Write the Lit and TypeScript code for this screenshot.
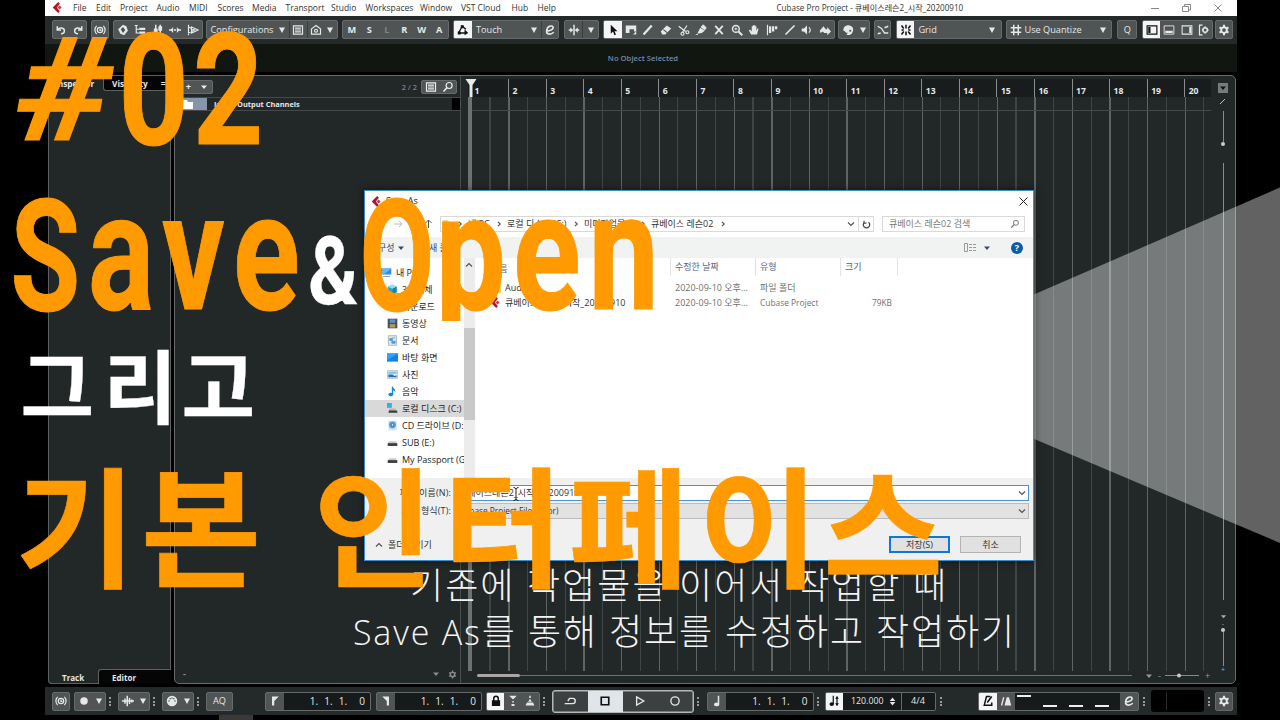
import { LitElement, html, css, svg } from "lit";
import { customElement } from "lit/decorators.js";

const icon = (body: unknown, w = 14, h = 14) =>
  html`<svg class="ic" width=${w} height=${h} viewBox="0 0 16 16" fill="none" stroke="currentColor" stroke-width="1.6">${body}</svg>`;

const I: Record<string, any> = {
  undo: svg`<path d="M3 3v5h5M3.5 7.5C6 4 12.500 4.500 12.500 9c0 2.500-2 4-4.500 4" stroke-width="2"/>`,
  redo: svg`<path d="M13 3v5H8M12.500 7.500C10 4 3.500 4.500 3.500 9c0 2.500 2 4 4.500 4" stroke-width="2"/>`,
  sync: svg`<circle cx="8" cy="8" r="3.600"/><path d="M8 6v2.500h2M3.500 2.500c-3 3-3 8 0 11M12.500 2.500c3 3 3 8 0 11"/>`,
  cube: svg`<path d="M8 1L1.500 7l3 6 5 2 5-6-2-6z" fill="currentColor" stroke="none"/><path d="M8 4l-3 3 3 5 3-4z" fill="#4c5050" stroke="none"/>`,
  tree: svg`<path d="M1 2h4M3 2v10h4M3 7h4"/><path d="M7 5h8v3H7zM7 10h8v3H7z" fill="currentColor" stroke="none"/>`,
  mix: svg`<path d="M5 1v14M11 1v14" stroke-width="2"/><path d="M2.500 6h5v6h-5zM8.500 3h5v6h-5z" fill="currentColor" stroke="none"/>`,
  wave: svg`<path d="M0 8h4M12 8h4M6.500 8h3" stroke-width="2"/><path d="M5.500 4v8L2 8zM10.500 4v8L14 8z" fill="currentColor" stroke="none"/>`,
  play2: svg`<path d="M2 1v14M2 4l8 4-8 4zM6 4l9 4-9 4z"/>`,
  list: svg`<path d="M2 2.500h12v11H2zM4 5.500h8M4 8h8M4 10.500h8"/>`,
  home: svg`<path d="M2 6.500L8 2l6 4.500V13.500H2z"/><circle cx="8" cy="9" r="2"/>`,
  auto: svg`<path d="M2 12L7 3l5 4" stroke-width="1.800"/><path d="M2 12h9" stroke-width="2"/><path d="M10 7l5 5-5 3zM5 1.500h4v4H5zM1 10h4v4H1z" fill="currentColor" stroke="none"/>`,
  e: svg`<path d="M3 9.500C8 9.500 13 7 12 4 11 1 4 3 3.500 9 3 14.500 9 14.500 13 11" stroke-width="2.200"/>`,
  scroll: svg`<path d="M8 1v14M1 8h3M12 8h3" stroke-width="2"/><path d="M3 4.500L7 8l-4 3.500zM13 4.500L9 8l4 3.500z" fill="currentColor" stroke="none"/>`,
  arrow: svg`<path d="M5 1v12l3-3 2 5 2-1-2-4.500h4z" fill="currentColor" stroke="none"/>`,
  range: svg`<path d="M1 2h14v8h-3V7H6v5H1z" fill="currentColor" stroke="none"/><path d="M8 13.500h3l4-4v4.500z" fill="currentColor" stroke="none"/>`,
  pencil: svg`<path d="M2 14L13 2" stroke-width="3"/>`,
  erase: svg`<path d="M1 10l8-8 6 4-8 8H3z" fill="currentColor" stroke="none"/><path d="M4.500 7.500l5 4" stroke="#4c5050"/>`,
  cut: svg`<path d="M1 3l9 7M12 2L6 11"/><circle cx="12.500" cy="11" r="2"/><circle cx="6" cy="13" r="2"/>`,
  glue: svg`<path d="M3 13l4-8 6 4-4 3z" fill="currentColor" stroke="none"/><path d="M8 4l3-3 4 4-2 3zM1 14h3" fill="currentColor" stroke-width="1"/>`,
  mute: svg`<path d="M3 2.500l10 11M13 2.500l-10 11" stroke-width="2.400"/>`,
  zoom: svg`<circle cx="6.500" cy="6.500" r="4.500" stroke-width="2"/><path d="M10 10l5 5" stroke-width="2.600"/><path d="M6.500 4.500v4M4.500 6.500h4" stroke-width="1.200"/>`,
  hand: svg`<path d="M4 14L1 8l2-.5L5 10V3h1.500v5V1.500H8V8V1.500h1.700V8 3h1.500v6l1.600-3.500 1.200.5-2 8z" fill="currentColor" stroke="none"/>`,
  comp: svg`<path d="M2 1v14" /><path d="M4 3h3v9H4zM8 3h3v7H8zM12 3h3v4h-3z" fill="currentColor" stroke="none"/>`,
  line: svg`<path d="M2 14L14 2" stroke-width="2.200"/>`,
  speak: svg`<path d="M1 6h3l4-4v12l-4-4H1z" fill="currentColor" stroke="none"/><path d="M10.500 4.500c2.500 2 2.500 5 0 7" stroke-width="1.600"/>`,
  warp: svg`<path d="M1 9l5-6 3 4h2V4l5 6-5 5v-3H7l-2-2-3 2z" fill="currentColor" stroke="none"/>`,
  pal: svg`<path d="M2 9c-1-5 4-8 8-7 5 1 6 6 4 9-1 3-5 5-8 3l3-4-2-1z" fill="currentColor" stroke="none"/><path d="M2 8h6l2 3-4 1z" fill="currentColor" stroke="none"/><circle cx="11" cy="9" r="1.400" fill="#4c5050" stroke="none"/>`,
  cross: svg`<path d="M1 3l5 3 4 6h5M1 13l4-1M10 5l5-2" stroke-width="1.800"/>`,
  snap: svg`<path d="M8 1v5M8 10v5M2 2l3 4M2 14l3-4M14 2l-3 4M14 14l-3-4M2 8h3M11 8h3" stroke-width="2"/>`,
  hash: svg`<path d="M5 1v14M11 1v14M1 5h14M1 11h14" stroke-width="2"/>`,
  zl: svg`<path d="M1.500 2.500h13v11h-13z"/><path d="M3 4h3v8H3z" fill="currentColor" stroke="none"/>`,
  zb: svg`<path d="M1.500 2.500h13v11h-13z" stroke-width="1.200"/><path d="M3 9h10v3H3z" fill="currentColor" stroke="none"/>`,
  zr: svg`<path d="M1.500 2.500h13v11h-13z" stroke-width="1.400"/><path d="M11 4h2.500v8H11z" fill="currentColor" stroke="none"/>`,
  zg: svg`<path d="M6 1.500H2v13h4"/><circle cx="9.500" cy="8" r="3" stroke-width="2"/><path d="M9.500 3v2M9.500 11v2M5 8h2M12.500 8h2"/>`,
  gear: svg`<circle cx="8" cy="8" r="3.800" stroke-width="2.600"/><path d="M8 1v3M8 12v3M2 4.500l2.600 1.500M11.400 10l2.600 1.500M2 11.500L4.600 10M11.400 6L14 4.500" stroke-width="2.600"/>`,
  lens: svg`<circle cx="9.500" cy="6" r="4"/><path d="M6.500 9L2 14" stroke-width="2"/>`,
  dot: svg`<circle cx="8" cy="8" r="5" fill="currentColor" stroke="none"/>`,
  wav2: svg`<path d="M0 8h16M4 4.500v7M7 1v14M10 4v8M13 6v4" stroke-width="2"/>`,
  midi: svg`<circle cx="8" cy="8" r="7" fill="currentColor" stroke="none"/><g fill="#4c5050" stroke="none"><circle cx="4" cy="8" r="1"/><circle cx="5.500" cy="5" r="1"/><circle cx="8" cy="4" r="1"/><circle cx="10.500" cy="5" r="1"/><circle cx="12" cy="8" r="1"/></g>`,
  locL: svg`<path d="M4 2h9l-6 6v6H4z" fill="currentColor" stroke="none"/>`,
  locR: svg`<path d="M3 2h9v12H9V8z" fill="currentColor" stroke="none"/>`,
  lock: svg`<path d="M2.500 7h11v7.500h-11z" fill="currentColor" stroke="none"/><path d="M5 8V4.500a3 3 0 0 1 6 0V8" stroke-width="2"/>`,
  pIn: svg`<path d="M3 1h10L8 6zM7 8h2v2H7zM6 12h4v2.500H6z" fill="currentColor" stroke="none"/>`,
  pOut: svg`<path d="M7 1h2v3H7zM8 5l2.500 4h-5zM2 14l2-4h8l2 4z" fill="currentColor" stroke="none"/>`,
  loop: svg`<path d="M1 11.500h10.500a3.500 3.500 0 0 0 0-7H7.500L5 8" stroke-width="1.800"/>`,
  stop: svg`<path d="M3 3h10v10H3z" stroke-width="2.200"/>`,
  play: svg`<path d="M3.500 2.500L13 8l-9.500 5.500z" stroke-width="1.800"/>`,
  rec: svg`<circle cx="8" cy="8" r="5.500" stroke-width="1.800"/>`,
  note: svg`<path d="M10 1v11" stroke-width="2"/><ellipse cx="7.500" cy="12.500" rx="3.500" ry="2.500" fill="currentColor" stroke="none"/>`,
  note2: svg`<path d="M7 1v11M12 2v12" stroke-width="1.600"/><path d="M9.500 5L12 1.500 14.500 5zM9.500 11l2.500 3.500 2.500-3.500z" fill="currentColor" stroke="none"/><ellipse cx="5" cy="12" rx="3" ry="2.500" fill="currentColor" stroke="none"/>`,
  metro: svg`<path d="M11 2H6L3 13.500h10V10M7 10l6-8" stroke-width="2"/>`,
  count: svg`<path d="M2 14L5 3" stroke-width="1.800"/><path d="M9 3h3l3 11H6z" fill="currentColor" stroke="none"/>`,
  tri: svg`<path d="M2 3h12L8 14z" fill="currentColor" stroke="none"/>`,
  flat: svg`<path d="M2 5h12l-6 7z" fill="currentColor" stroke="none"/>`,
  spin: svg`<path d="M3 7l5-6 5 6zM3 9h10l-5 6z" fill="currentColor" stroke="none"/>`,
};
const ic = (n: string, s = 12) => icon(I[n], s, s);

type Cell = [string, number, string?];
/* one toolbar cell: [content, width, extra classes]; "@name" selects an icon */
const cell = ([c, w, k = ""]: Cell) =>
  html`<span class="cell ${k}" style="width:${w}px">${c[0] === "@" ? ic(c.slice(1), /tri|flat/.test(c) ? 8 : 12) : c}</span>`;
const group = (cells: Cell[], k = "") => html`<span class="group ${k}">${cells.map(cell)}</span>`;
const space = (w: number) => html`<span class="sp" style="width:${w}px"></span>`;

const MENU: [string, number][] = [["File", 23], ["Edit", 24], ["Project", 36.500], ["Audio", 32.500], ["MIDI", 28.500], ["Scores", 34.500], ["Media", 33.500], ["Transport", 45.500], ["Studio", 34.500], ["Workspaces", 54.500], ["Window", 41], ["VST Cloud", 50.500], ["Hub", 26], ["Help", 239]];

const NAV: [string, string][] = [["pc", "내 PC"], ["cube", "3D 개체"], ["down", "다운로드"], ["film", "동영상"], ["doc", "문서"], ["desk", "바탕 화면"], ["pic", "사진"], ["music", "음악"], ["disk", "로컬 디스크 (C:)"], ["cd", "CD 드라이브 (D:)"], ["drive", "SUB (E:)"], ["drive", "My Passport (G:)"]];
const drive = svg`<path d="M3 6h10l2 4H1z" fill="#c8c8c8"/><path d="M1 9h14v4H1z" fill="#3c3c3c"/>`;
const NI: Record<string, any> = {
  pc: svg`<path d="M0 2h15v9H0z" fill="#2d8fe0"/><path d="M1 3h13l-9 7H1z" fill="#67b8f3"/><path d="M3 13h10v1.500H3z" fill="#8fa3b3"/>`,
  cube: svg`<path d="M1 4l7-3 6 3v8l-6 3-7-3z" fill="#27a4cf"/><path d="M1 4l7-3 6 3-6 3z" fill="#8ee1f3"/><path d="M8 7l6-3v8l-6 3z" fill="#1782ab"/>`,
  down: svg`<path d="M6 1h4v7h4l-6 7-6-7h4z" fill="#2b6fb8"/>`,
  film: svg`<path d="M1 1h14v14H1z" fill="#4a4f58"/><path d="M4 2h8v5H4z" fill="#5f93c8"/><path d="M4 9h8v5H4z" fill="#b59a5f"/>`,
  doc: svg`<path d="M2 1h12v14H2z" fill="#dfe9f0" stroke="#8ca0b0"/><path d="M4 5h4v3H4zM7 9h5v3H7zM8 4h4" fill="#4a9bd0" stroke="#4a9bd0"/>`,
  desk: svg`<path d="M0 2h16v12H0z" fill="#1583e0"/><path d="M0 2h16L0 12z" fill="#2fa4f8"/>`,
  pic: svg`<path d="M.5 2.500h15v11H.5z" fill="#e5eef5" stroke="#9aa8b2"/><path d="M2 8h6l3 2 3-1v3H2z" fill="#2774ad"/><path d="M2 4h12v3H2z" fill="#7fc1ea"/>`,
  music: svg`<path d="M8 1v11" stroke="#1a86d0" stroke-width="2"/><path d="M8 1c1 3 5 3 4 8-1-2-2-3-4-3z" fill="#1a86d0"/><ellipse cx="5.500" cy="12.500" rx="3.500" ry="2.600" fill="#1a86d0"/>`,
  disk: svg`<path d="M0 0h7v7H0z" fill="#35aee2"/><path d="M3 10h10l2 2v2H2z" fill="#3c3c3c"/><path d="M3 8h9l2 3H3z" fill="#b8b8b8"/>`,
  cd: svg`<path d="M2 1h12v14H2z" fill="#cfe0ec"/><circle cx="8" cy="7" r="5" fill="#4c9ed8"/><circle cx="8" cy="7" r="1.800" fill="#e8f4fb" stroke="#1b5f95"/>`,
  drive,
};
const LOGO = svg`<path d="M9 0L1 8l8 8 2.500-2.500L7 8l4.500-5.500z" fill="#b0172c"/><path d="M11 5l3 3-3 3-3-3z" fill="#c93a4c"/>`;
const pic = (b: unknown, s = 12) => html`<svg class="ic" width=${s} height=${s} viewBox="0 0 16 16" fill="none">${b}</svg>`;
const chev = (d: string, s = 8) => html`<svg class="ic" width=${s} height=${s} viewBox="0 0 8 8" fill="none" stroke="#555" stroke-width="1.200"><path d=${d}></path></svg>`;
const DN = "M1 2.500l3 3 3-3", RT = "M3 1.800l2.200 2.200-2.200 2.200", UP = "M1 5.500l3-3 3 3";

/* display lettering: every glyph is set at its own x, condensed by sx */
const letters = (s: string, xs: number[], y: number, size: number, sx: number, k: string) =>
  svg`<text class=${k} font-size=${size} transform="translate(0 ${y}) scale(${sx} 1)" x=${xs.map((x) => (x / sx).toFixed(1)).join(" ")}>${s}</text>`;

@customElement("app-root")
export class AppRoot extends LitElement {
  static styles = css`
    :host { display: block; position: relative; width: 1280px; height: 720px; overflow: hidden; background: #000; color: #e6e8e8;
      font: 9px/12px "Open Sans", "Noto Sans CJK KR", sans-serif; }
    * { box-sizing: border-box; }
    .ic { flex: none; display: block; }
    .app { display: flex; flex-direction: column; width: 1192px; height: 720px; margin-left: 45px; }
    .menu { display: flex; align-items: center; height: 16px; background: #fff; color: #333; padding: 0 0 1px 7px; white-space: nowrap; font-size: 8.500px; flex: none; }
    .menu .logo { width: 21px; }
    .mi { flex: none; }
    .wtitle { width: 374px; font-size: 8.100px; flex: none; }
    .winbtn { display: flex; gap: 23px; color: #888; }
    .bar { display: flex; align-items: flex-start; height: 28px; padding: 4px 0 0 7px; background: #24292a; flex: none; }
    .group { display: flex; height: 19px; background: #505454; border: 1px solid #666a6a; border-radius: 2px; flex: none; overflow: hidden; }
    .sp { flex: none; }
    .cell { display: flex; align-items: center; justify-content: center; flex: none; white-space: nowrap; font-size: 9.200px; }
    .l { justify-content: flex-start; padding-left: 4px; }
    .q1 { justify-content: flex-start; }
    .b { font-weight: 700; }
    .dim { color: #808484; }
    .on { background: #f4f6f6; color: #111; }
    .dv { border-left: 1px solid #3a3e3e; }
    .tdv { border-left: 1px solid #666a6a; }
    .dk { background: #161a1a; }
    .num { font-size: 10px; word-spacing: 3.500px; justify-content: flex-end; padding-right: 5px; white-space: pre; }
    .tempo { display: flex; align-items: center; justify-content: flex-end; gap: 4px; width: 58px; padding-right: 4px; font-size: 8.800px; background: #161a1a; }
    .info { display: flex; height: 28px; background: #121611; align-items: center; justify-content: center; color: #7288a6; font-weight: 600; font-size: 7.700px; padding-left: 4px; flex: none; }
    .main { display: flex; height: 615px; padding: 3px 1px 3px 3px; gap: 3px; flex: none; }
    .left { display: flex; flex-direction: column; width: 123px; background: #222728; border-radius: 4px; border-top: 1px solid #5c6060; font-weight: 700; font-size: 8.300px; }
    .lt { display: flex; height: 15px; }
    .lt .a, .lb .a { border-left: 1px solid #5c6060; }
    .lt .a { width: 55px; padding: 2px 0 0 6px; }
    .lt .v { flex: 1; display: flex; gap: 13px; background: #050505; border: solid #5c6060; border-width: 0 0 1px 1px; border-radius: 0 0 0 3px; padding: 2px 0 0 8px; }
    .lm { flex: 1; border: solid #5c6060; border-width: 0 1px 0 1px; }
    .lb { display: flex; height: 15px; }
    .lb .a { width: 50px; border-bottom: 1px solid #5c6060; border-radius: 0 0 0 4px; padding: 3px 0 0 13px; font-size: 8px; }
    .lb .e { flex: 1; background: #050505; border: solid #5c6060; border-width: 1px 0 0 1px; border-radius: 3px 0 0 0; padding: 2px 0 0 13px; font-size: 8px; }
    .center { display: flex; width: 1062px; background: #222728; border: 1px solid #666a6a; border-radius: 5px; }
    .tracks { display: flex; flex-direction: column; width: 286px; border-right: 1px solid #4a4e4e; flex: none; }
    .th { display: flex; align-items: center; height: 21px; padding: 0 3px 0 5px; color: #98a0a0; font-size: 7.500px; }
    .th .group { height: 14px; color: #eee; }
    .grow { flex: 1; }
    .tr { display: flex; height: 14px; border: solid #454949; border-width: 1px 0; font-weight: 700; font-size: 7.400px; line-height: 12px; }
    .sw { width: 32px; background: #8496ab; padding: 0 0 0 7px; }
    .tn { flex: 1; padding-left: 7px; }
    .tb { width: 8px; background: #000; }
    .foot { display: flex; align-items: center; justify-content: space-between; height: 18px; padding: 0 3px 0 8px; color: #8a8e8e; }
    .foot span { display: flex; gap: 8px; }
    .arr { display: flex; flex-direction: column; width: 750px; padding-left: 7px; flex: none; }
    .ruler { display: flex; height: 21px; background: linear-gradient(#222728 3px, #181c1c 3px); padding-left: 2.500px; }
    .rb { flex: none; width: 37.570px; padding: 7px 0 0 3.500px; margin-top: 3px; border-left: 1px solid #8a8e8e; height: 18px; font-weight: 700; font-size: 8.600px; line-height: 10px; }
    .rb:first-child { padding-left: 3px; border-color: transparent; }
    .grid { height: 574px; background: linear-gradient(#454949, #454949) 0 13px / 100% 1px no-repeat,
      repeating-linear-gradient(90deg, transparent 0 17.500px, #3f4545 17.500px 18.600px, transparent 18.600px 36.300px, #5e6464 36.300px 37.570px);
      border-left: 4px solid #6d7171; }
    .hs { display: flex; align-items: center; height: 9px; padding-left: 9px; color: #999; width: 750px; }
    .hs .th1 { width: 43px; height: 3px; border-radius: 2px; background: #aaa6a6; flex: none; }
    .hs .ln { width: 612px; height: 1px; background: #6d7171; flex: none; }
    .rs { display: flex; flex-direction: column; align-items: center; width: 24px; padding-top: 7px; color: #aaa; font-size: 7px; line-height: 8px; }
    .sel { display: grid; place-items: center; width: 10px; height: 10px; background: #777b7b; color: #111; }
    .vl { width: 1px; background: #888c8c; }
    .v1 { height: 31px; } .v2 { height: 437px; margin-top: 17px; } .v3 { height: 34px; }
    .kn { width: 4px; height: 4px; border-radius: 2px; background: #ccc; }
    .pad { height: 9px; }
    .tp { display: flex; align-items: center; height: 28px; background: #24292a; padding-left: 7px; flex: none; }
    .trans { height: 23px; border: 1px solid #b4b8b8; box-shadow: inset 0 0 0 .5px #b4b8b8; background: #3c4040; border-radius: 3px; }
    .trans .on { background: #dfe5e9; }
    .dots { width: 2px; height: 9px; background: repeating-linear-gradient(#999 0 2px, transparent 2px 3.500px); flex: none; }
    .beats { display: flex; gap: 12px; width: 105px; padding: 2px 2px 3px; background: #161a1a; align-items: flex-end; }
    .beats i { width: 14px; height: 2px; background: #eee; }
    .beats i:first-child { align-self: flex-start; }
    .meter { width: 53px; height: 22px; background: #000; border-radius: 3px; padding-left: 15px; flex: none; }
    .meter i { display: block; width: 1px; height: 18px; margin-top: 2px; background: #2a2c2c; }
    .tab { width: 34px; height: 5px; background: #3a3838; margin-left: 174px; }

    .over { position: absolute; left: 0; top: 0; width: 1280px; height: 720px; display: block; }
    .big { fill: #ff9a00; stroke: #ff9a00; stroke-width: 1px; font-family: Roboto, "Noto Sans CJK KR", sans-serif; font-weight: 700; }
    .big.kr { font-family: "Noto Sans CJK KR", sans-serif; stroke-width: .6px; }
    .big.wh { fill: #fff; stroke: #fff; stroke-width: .3px; }
    .cap { fill: #f4f4f4; font-family: "Open Sans", "Noto Sans CJK KR", sans-serif; font-weight: 300; }

    .dlg { position: absolute; left: 364px; top: 190px; width: 670px; height: 371px; display: flex; flex-direction: column; background: #fff; border: 1px solid #3d8fca; color: #333; white-space: nowrap; box-shadow: 0 0 8px rgba(0,0,0,.5); }
    .dt { display: flex; align-items: center; height: 20px; padding: 0 5px 0 6px; gap: 4px; color: #222; flex: none; }
    .ad { display: flex; align-items: center; height: 26px; padding: 0 8px 0 10px; flex: none; }
    .ad .bw { width: 65px; display: flex; gap: 19px; padding-left: 18px; flex: none; }
    .path { display: flex; align-items: center; width: 434px; height: 16px; border: 1px solid #d9d9d9; padding-left: 2px; flex: none; }
    .path .f { flex: none; }
    .rf { width: 15px; height: 14px; border-left: 1px solid #d9d9d9; display: grid; place-items: center; flex: none; }
    .q { display: flex; align-items: center; justify-content: space-between; width: 143px; height: 16px; margin-left: 8px; border: 1px solid #d9d9d9; padding: 0 4px 0 6px; color: #777; flex: none; }
    .tl { display: flex; align-items: center; height: 21px; background: #f0f3f2; padding: 0 10px 0 13px; color: #3b4a66; flex: none; }
    .tl .k { display: grid; place-items: center; width: 12px; height: 12px; border-radius: 6px; background: #0b5cad; color: #fff; font-weight: 700; margin-left: 20px; }
    .mid { display: flex; height: 220px; flex: none; }
    .nav { width: 99px; padding-top: 6px; overflow: hidden; }
    .ni { display: flex; align-items: center; gap: 4px; height: 17px; padding-left: 22px; color: #222; }
    .ni:first-child { padding-left: 16px; }
    .ni.s { background: #d9d9d9; }
    .sc { width: 11px; background: #ececec; padding: 3px 1px 0; }
    .sc i { display: block; height: 92px; margin: 59px -1px 0; background: #c9c9c9; }
    .files { flex: 1; padding-left: 1px; }
    .row { display: grid; grid-template-columns: 195px 85px 85px 57px; align-items: center; height: 15px; color: #6f6f6f; }
    .row.h { height: 18px; margin-bottom: 4px; color: #56657d; }
    .row.h span { height: 18px; border-right: 1px solid #e2e2e2; padding: 3px 0 0 4px; }
    .row span { padding-left: 4px; }
    .row .n { display: flex; gap: 4px; padding-left: 14px; color: #333; align-items: center; }
    .row.h .n { padding-left: 15px; color: #56657d; }
    .row .r { text-align: right; padding-right: 6px; }
    .lat { font-size: 8.400px; }
    .bot { flex: 1; background: #f0f0f0; padding: 7px 4px 0 3px; display: flex; flex-direction: column; gap: 2px; }
    .fr { display: flex; height: 16px; align-items: center; }
    .fr label { width: 83px; letter-spacing: .15px; text-align: right; padding-right: 0; margin-right: 3px; }
    .cb { flex: 1; display: flex; align-items: center; justify-content: space-between; height: 16px; border: 1px solid #4d93c9; background: #fff; padding: 0 2px 0 4px; }
    .cb.g { background: #e2e2e2; border-color: #bcbcbc; font-size: 8.300px; }
    .bt { display: flex; align-items: center; padding: 15px 8px 0 7px; gap: 10px; }
    .btn { display: grid; place-items: center; width: 61px; height: 17px; background: #e1e1e1; border: 1px solid #b4b4b4; }
    .btn.p { border: 2px solid #0f78d4; }
    .hide { display: flex; gap: 5px; flex: 1; align-items: center; }
  `;

  private menu() {
    return html`<div class="menu"><span class="logo">${pic(LOGO, 11)}</span>
      ${MENU.map(([t, w]) => html`<span class="mi" style="width:${w}px">${t}</span>`)}
      <span class="wtitle">Cubase Pro Project - 큐베이스레슨2_시작_20200910</span>
      <span class="winbtn">
        <svg class="ic" width="8" height="8" fill="none" stroke="currentColor"><path d="M0 4.500h8"></path></svg>
        <svg class="ic" width="9" height="8" fill="none" stroke="currentColor"><path d="M.5 2.500h6v5h-6zM2.500 2V.5h6V6H7"></path></svg>
        <svg class="ic" width="8" height="8" fill="none" stroke="currentColor"><path d="M.5.5l7 7M7.500.5l-7 7"></path></svg>
      </span></div>`;
  }

  private toolbar() {
    const m = ["M", "S", "L", "R", "W", "A"].map((c): Cell => [c, 17.500, c === "L" ? "b dim" : "b"]);
    const tools = ["arrow", "range", "pencil", "erase", "cut", "glue", "mute", "zoom", "hand", "comp", "line", "speak", "warp"].map((n, i): Cell => ["@" + n, 17.700, i ? "" : "on"]);
    return html`<div class="bar">
      ${group([["@undo", 16.500], ["@redo", 16.500]])}${space(4)}
      ${group([["@sync", 16]])}${space(4)}
      ${group([["@cube", 17.500], ["@tree", 17.500], ["@mix", 17.500], ["@wave", 17.500], ["@play2", 17.500]])}${space(3)}
      ${group([["Configurations", 68, "l"], ["@tri", 14], ["@list", 18, "dv"], ["@home", 17, "dv"], ["@tri", 13]])}${space(4.500)}
      ${group(m)}${space(4)}
      ${group([["@auto", 18, "on"], ["Touch", 54, "l"], ["@tri", 15], ["@e", 17, "dv"]])}${space(5)}
      ${group([["@scroll", 17], ["@tri", 16, "dv"]])}${space(4)}
      ${group(tools)}${space(3.500)}
      ${group([["@pal", 17], ["@tri", 13]])}${space(4)}
      ${group([["@cross", 15]])}${space(5)}
      ${group([["@snap", 17, "on"], ["Grid", 69, "l"], ["@tri", 18]])}${space(4)}
      ${group([["@hash", 17], ["Use Quantize", 70, "q1"], ["@tri", 17]])}${space(5)}
      ${group([["Q", 18]])}${space(5)}
      ${group([["@zl", 17, "on"], ["@zb", 17.500], ["@zr", 17.500], ["@zg", 17]])}${space(2)}
      ${group([["@gear", 16]])}
    </div>`;
  }

  private transport() {
    const dots = html`<span class="dots"></span>`;
    return html`<div class="tp">
      ${group([["@sync", 16]])}${space(4)}${group([["@dot", 17], ["@tri", 13]])}${space(3)}${dots}${space(7)}
      ${group([["@wav2", 17], ["@tri", 13]])}${space(3)}${dots}${space(7)}
      ${group([["@midi", 17], ["@tri", 13]])}${space(3)}${dots}${space(7)}
      ${group([["AQ", 25]])}${space(32)}
      ${group([["@locL", 18], ["1. 1. 1.  0", 86, "dk num"]])}${space(5)}
      ${group([["@locR", 18], ["1. 1. 1.  0", 86, "dk num"]])}${space(4)}
      ${group([["@lock", 17, "on"], ["@pIn", 17.500], ["@pOut", 17]])}${space(3)}${dots}${space(7)}
      ${group([["@loop", 35], ["@stop", 35, "on"], ["@play", 35], ["@rec", 35]], "trans")}${space(3)}${dots}${space(8)}
      ${group([["@note", 18], ["1. 1. 1.  0", 87, "dk num"]])}${space(3)}${dots}${space(6)}
      <span class="group">${cell(["@note2", 17, "on"])}<span class="tempo">120.000 ${ic("spin", 9)}</span>${cell(["4/4", 34, "dk tdv"])}</span>${space(4)}${dots}${space(36)}
      <span class="group">${cell(["@metro", 18, "on"])}${cell(["@count", 18])}<span class="beats"><i></i><i></i><i></i><i></i></span>${cell(["@e", 18])}</span>
      ${space(4)}${dots}${space(6)}<span class="meter"><i></i></span>${space(4)}${dots}${space(5)}
      ${group([["@gear", 16]])}
    </div>`;
  }

  private workspace() {
    return html`<div class="main">
      <div class="left">
        <div class="lt"><span class="a">Inspector</span><span class="v"><span>Visibility</span><span>=</span></span></div>
        <div class="lm"></div>
        <div class="lb"><span class="a">Track</span><span class="e">Editor</span></div>
      </div>
      <div class="center">
        <div class="tracks">
          <div class="th">${group([["+", 15, "b"], ["@flat", 16]])}<span class="grow"></span>2 / 2${space(4)}${group([["@list", 17], ["@lens", 17]])}</div>
          <div class="tr"><span class="sw"><svg class="ic" width="12" height="12"><path d="M1 2h4l1 2h5v7H1z" fill="#fff"></path></svg></span><span class="tn">Input/Output Channels</span><span class="tb"></span></div>
          <div class="grow"></div>
          <div class="foot"><b>-</b><span>${ic("flat", 8)}${ic("gear", 9)}</span></div>
        </div>
        <div class="arr">
          <div class="ruler">${Array.from({ length: 20 }, (_, i) => html`<span class="rb">${i + 1}</span>`)}</div>
          <div class="grid"></div>
          <div class="hs"><span class="th1"></span><span class="ln"></span>${space(13)}${ic("flat", 8)}${space(5)}-${space(4)}<svg class="ic" width="34" height="5"><path d="M0 2h34v1H0z" fill="#888"></path><circle cx="14" cy="2.500" r="2" fill="#ccc"></circle></svg>${space(6)}+</div>
        </div>
        <div class="rs"><span class="sel">${ic("flat", 8)}</span><svg class="ic" width="10" height="18" stroke="#bbb"><path d="M2 11l5-5"></path></svg>
          <span class="vl v1"></span><span class="kn"></span><span class="vl v2"></span><span class="grow"></span>${ic("flat", 7)}-<span class="kn"></span><span class="vl v3"></span>+<span class="pad"></span></div>
      </div>
    </div>`;
  }

  private dialog() {
    const p = (t: string, w: number) => html`<span class="f" style="width:${w}px">${t}</span>${chev(RT)}`;
    return html`<div class="dlg">
      <div class="dt">${pic(LOGO, 11)}<span>Save As</span><span class="grow"></span><svg class="ic" width="9" height="9" stroke="#222"><path d="M.5.5l8 8M8.500.5l-8 8"></path></svg></div>
      <div class="ad"><span class="bw"><svg class="ic" width="11" height="10" fill="none" stroke="#bbb"><path d="M1 5h8M6 2l3 3-3 3"></path></svg><svg class="ic" width="11" height="10" fill="none" stroke="#555"><path d="M5.500 9V1M2.500 4l3-3 3 3"></path></svg></span>
        <span class="path"><svg class="ic" width="13" height="11"><path d="M0 1h5l1 2h6v8H0z" fill="#f8d775"></path></svg>${chev(RT)}${space(4)}${p("내 PC", 27)}${space(4)}${p("로컬 디스크 (C:)", 65)}${space(4)}${p("미디작업물", 55)}${space(4)}${p("큐베이스 레슨02", 68)}<span class="grow"></span>${chev(DN)}${space(3)}<span class="rf"><svg class="ic" width="9" height="9" viewBox="0 0 9 9" fill="none" stroke="#444" stroke-width="1.200"><path d="M2.500 2.200a3.200 3.200 0 1 0 4 0M2 .8v2.400h2.400"></path></svg></span></span>
        <span class="q">큐베이스 레슨02 검색 ${icon(I.lens, 10, 10)}</span></div>
      <div class="tl">구성&nbsp; ${ic("flat", 8)}${space(24)}새 폴더<span class="grow"></span>
        <svg class="ic" width="14" height="10" fill="none" stroke="#999"><path d="M.5.5h3v8h-3zM5 1.500h3M9 1.500h3M5 4.500h3M9 4.500h3M5 7.500h3M9 7.500h3"></path></svg>${space(5)}${ic("flat", 8)}<span class="k">?</span></div>
      <div class="mid">
        <div class="nav">${NAV.map(([k, t]) => html`<div class="ni ${k === "disk" ? "s" : ""}">${pic(NI[k], 11)}<span>${t}</span></div>`)}</div>
        <div class="sc">${chev(UP)}<i></i></div>
        <div class="files">
          <div class="row h"><span class="n">이름</span><span>수정한 날짜</span><span>유형</span><span>크기</span></div>
          <div class="row"><span class="n"><svg class="ic" width="11" height="10"><path d="M0 1h4l1 1h6v8H0z" fill="#f8d775"></path></svg>Audio</span><span>2020-09-10 오후...</span><span>파일 폴더</span></div>
          <div class="row"><span class="n">${pic(LOGO, 11)}큐베이스레슨2_시작_20200910</span><span>2020-09-10 오후...</span><span class="lat">Cubase Project</span><span class="r lat">79KB</span></div>
        </div>
      </div>
      <div class="bot">
        <div class="fr"><label>파일 이름(N):</label><span class="cb">큐베이스레슨2_시작_20200910<span class="grow"></span>${chev(DN)}</span></div>
        <div class="fr"><label>파일 형식(T):</label><span class="cb g">Cubase Project File (*.cpr)<span class="grow"></span>${chev(DN)}</span></div>
        <div class="bt"><span class="hide">${chev(UP)}폴더 숨기기</span><span class="btn p">저장(S)</span><span class="btn">취소</span></div>
      </div>
    </div>`;
  }

  render() {
    return html`
      <div class="app">${this.menu()}${this.toolbar()}<div class="info">No Object Selected</div>${this.workspace()}${this.transport()}<div class="tab"></div></div>
      <svg class="over" viewBox="0 0 1280 720"><path d="M465.500 79h11l-4 6v12h-3V85z" fill="#e8eaea"></path><path d="M1000 309.300L1280 187.500V543L1000 424.600z" fill="#fff" opacity=".385"></path></svg>
      ${this.dialog()}
      <svg class="over" viewBox="0 0 1280 720">
        <defs><clipPath id="desc"><path d="M0 0h1280v321H0z"></path></clipPath></defs>
        <path d="M513.500 487.500q2 0 2.500 1.500v10q-.5 1.500-2.500 1.500M518.500 487.500q-2 0-2.500 1.500M516 499q.5 1.500 2.500 1.500" fill="none" stroke="#222"></path>
        <text class="cap" x="410" y="599" font-size="36" textLength="536">기존에 작업물을 이어서 작업할 때</text>
        <text class="cap" x="353" y="645" font-size="36" textLength="661"><tspan font-size="34">Save As</tspan>를 통해 정보를 수정하고 작업하기</text>
        <text class="big" font-size="144" transform="translate(8 140) skewX(-10) scale(1.12 1)">#</text>
        ${letters("02", [118.500, 193], 144, 155, 0.79, "big")}
        ${letters("S", [10.500], 310, 155, 0.73, "big")}
        ${letters("ave", [88, 162, 233], 309, 165, 0.75, "big")}
        ${letters("&", [308], 304, 94, 0.81, "big wh")}
        ${letters("O", [359.500], 310, 155, 0.7, "big")}
        <g clip-path="url(#desc)">${letters("pen", [435.500, 513, 588.500], 309, 165, 0.76, "big")}</g>
        ${letters("그리고", [20.500, 103.500, 181.500], 417, 80, 1, "big kr wh")}
        ${letters("기본 인터페이스", [15.500, 141, 270, 313.500, 443, 568.500, 698.500, 823], 577, 130, 1.005, "big kr")}
      </svg>`;
  }
}
